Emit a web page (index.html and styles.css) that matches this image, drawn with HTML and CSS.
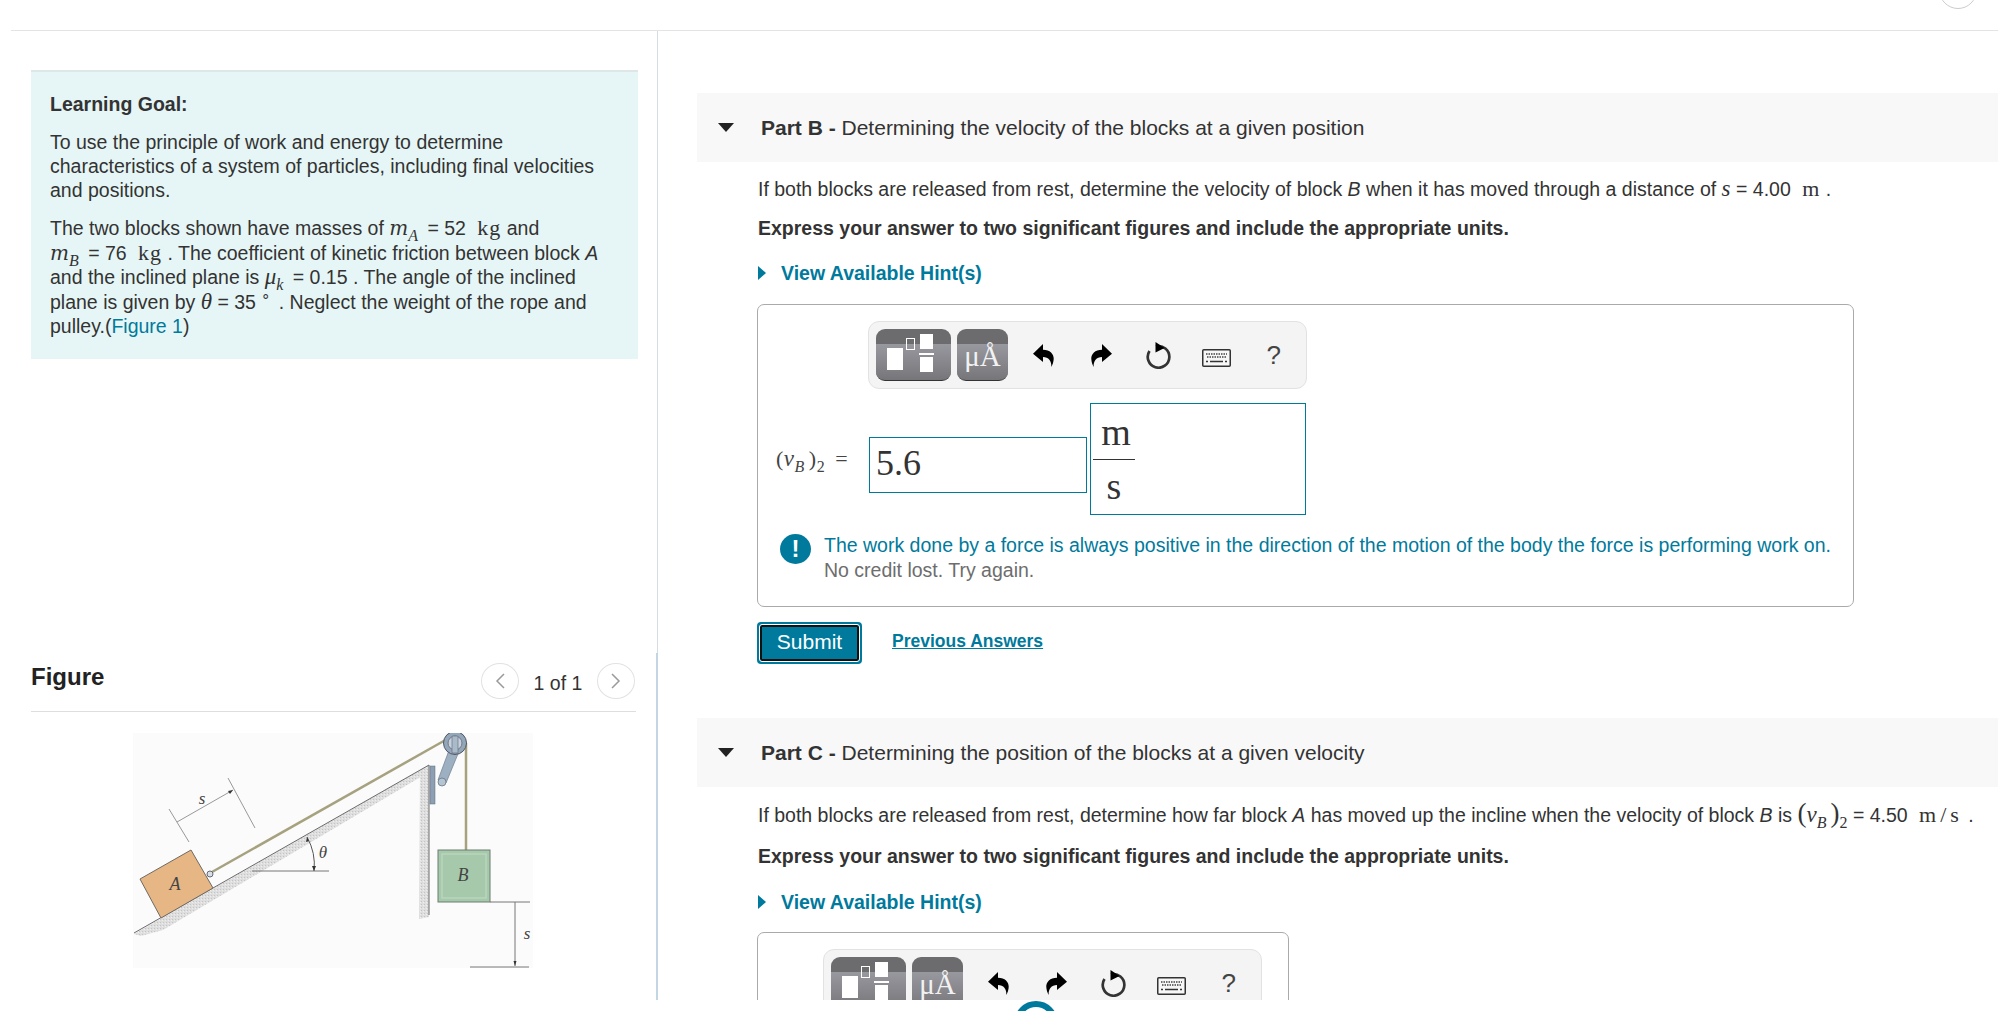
FILE: index.html
```html
<!DOCTYPE html>
<html lang="en">
<head>
<meta charset="utf-8">
<title>Work and energy</title>
<link rel="stylesheet" href="styles.css">
</head>
<body>
<div class="page">
  <header class="topbar"><span class="top-circle"></span></header>
  <main class="main">
    <section class="left">
      <div class="left-top">
        <div class="goal">
          <p class="goal-title">Learning Goal:</p>
          <p class="goal-p">To use the principle of work and energy to determine characteristics of a system of particles, including final velocities and positions.</p>
          <p class="goal-p goal-p2">The two blocks shown have masses of <span class="mi mi-m">m</span><sub class="ms">A</sub> = 52 <span class="mu">kg</span> and<br><span class="mi mi-m">m</span><sub class="ms">B</sub> = 76 <span class="mu">kg</span> . The coefficient of kinetic friction between block <i>A</i> and the inclined plane is <span class="mi">μ</span><sub class="ms">k</sub> = 0.15 . The angle of the inclined plane is given by <span class="mi">θ</span> = 35 <sup class="deg">∘</sup> . Neglect the weight of the rope and pulley.(<a class="link">Figure 1</a>)</p>
        </div>
      </div>
      <div class="figure">
        <div class="fig-head">
          <h2 class="fig-title">Figure</h2>
          <div class="fig-nav">
            <span class="nav-btn"><svg width="12" height="18" viewBox="0 0 12 18"><path d="M10 2 3 9l7 7" class="chev"/></svg></span>
            <span class="fig-count">1 of 1</span>
            <span class="nav-btn"><svg width="12" height="18" viewBox="0 0 12 18"><path d="M2 2l7 7-7 7" class="chev"/></svg></span>
          </div>
        </div>
        <svg class="diagram" width="400" height="235" viewBox="0 0 400 235">
          <defs>
            <pattern id="stip" width="3" height="3" patternUnits="userSpaceOnUse"><rect width="3" height="3" fill="#dedede"/><rect width="1" height="1" fill="#c4c4c4"/><rect x="2" y="1" width="1" height="1" fill="#eeeeee"/></pattern>
          </defs>
          <rect width="400" height="235" fill="#fbfbfb"/>
          <polygon points="1,201 296,32 296,39 30,197 8,203" fill="url(#stip)"/>
          <polygon points="287,38 296,32 296,184 286,186" fill="url(#stip)"/>
          <path d="M1 200 296 32V182" fill="none" stroke="#6a6a6a" stroke-width="1"/>
          <path d="M79 139 316 5" stroke="#a6a27f" stroke-width="2.500" fill="none"/>
          <path d="M333 10V117" stroke="#a6a27f" stroke-width="2.500" fill="none"/>
          <polygon points="318,12 327,16 313,50 305,47" fill="#9db0c2" stroke="#6d7d8e" stroke-width=".7"/>
          <rect x="297" y="33" width="5" height="38" fill="#8d9fb2" stroke="#5c6b7a" stroke-width=".5"/>
          <circle cx="309" cy="49" r="4" fill="#b4c4d2" stroke="#5c6b7a" stroke-width=".7"/>
          <circle cx="322" cy="10" r="11.500" fill="#93a7ba" stroke="#556" stroke-width="1"/>
          <circle cx="322" cy="10" r="7" fill="#c5d2de" stroke="#778"/>
          <rect x="319" y="3" width="6" height="17" rx="1" fill="#a9bac9" stroke="#667" stroke-width=".6"/>
          <circle cx="77" cy="141" r="3" fill="#d8dfe5" stroke="#667"/>
          <polygon points="7,146 58,117 80,155 28,185" fill="#e6b784" stroke="#6f6a62" stroke-width="1"/>
          <text x="42" y="157" class="dg dg-big">A</text>
          <rect x="305" y="117" width="52" height="52" fill="#a6c9ac" stroke="#6c7d70" stroke-width="1"/>
          <rect x="309" y="121" width="44" height="44" fill="none" stroke="#bfdcc4" stroke-width="1"/>
          <text x="330" y="148" class="dg dg-big">B</text>
          <path d="M357 169H397M382 169V233M337 234H396" stroke="#777" fill="none" stroke-width="1"/>
          <path d="M382 233l-1.500-5h3z" fill="#333"/>
          <text x="394" y="206" class="dg">s</text>
          <path d="M36 76 56 109M95 45 122 95M44 89 100 57" stroke="#999" fill="none" stroke-width="1"/>
          <path d="M100 57l-5 1 2 3z" fill="#333"/>
          <text x="69" y="71" class="dg">s</text>
          <path d="M119 138H196" stroke="#777" fill="none" stroke-width="1"/>
          <path d="M174 104Q183 120 181 138" stroke="#555" fill="none" stroke-width="1"/>
          <path d="M174 104l-1 5 3-1zM181 138l-2-5h4z" fill="#333"/>
          <text x="190" y="125" class="dg">θ</text>
        </svg>
      </div>
    </section>
    <section class="right">
      <article class="part part-b">
        <h3 class="part-head"><span class="tri-down"></span><b class="part-b-label">Part B -</b> Determining the velocity of the blocks at a given position</h3>
        <div class="part-body">
          <p class="q">If both blocks are released from rest, determine the velocity of block <i>B</i> when it has moved through a distance of <span class="mi">s</span> = 4.00 <span class="mu">m</span> .</p>
          <p class="q q-bold">Express your answer to two significant figures and include the appropriate units.</p>
          <p class="hint"><span class="tri-right"></span>View Available Hint(s)</p>
          <div class="box box-b">
            <div class="toolbar toolbar-b">
              <span class="tbtn tbtn-wide">
                <i class="t-big"></i><i class="t-sup"></i><i class="t-num"></i><i class="t-bar"></i><i class="t-den"></i>
              </span>
              <span class="tbtn tbtn-units">μÅ</span>
              <span class="tools">
                <span class="tool"><svg width="21" height="23" viewBox="0 0 21 23"><path class="ico" d="M0 9.700 10 0V5.700C17 5.700 21 10 20.700 15 20.500 18 19.500 21 18.300 23 18.800 17 15.500 13 10 13V18Z"/></svg></span>
                <span class="tool"><svg width="21" height="23" viewBox="0 0 21 23"><path class="ico" d="M21 9.700 11 0V5.700C4 5.700 0 10 .3 15 .5 18 1.500 21 2.700 23 2.200 17 5.500 13 11 13V18Z"/></svg></span>
                <span class="tool"><svg width="25" height="27" viewBox="0 0 25 27"><path d="M10 4.400A10.800 10.800 0 1 1 3.500 9" fill="none" stroke="#333" stroke-width="2.700"/><path class="ico" d="M9.500 0 18.500 6 9.500 10.500Z"/></svg></span>
                <span class="tool tool-kb"><svg width="29" height="18" viewBox="0 0 29 18"><rect x=".75" y=".75" width="27.500" height="16.500" rx="1" fill="#f7f7f7" stroke="#333" stroke-width="1.500"/><path d="M4 5H25M5 8H24" stroke="#444" stroke-width="1.500" stroke-dasharray="1.500 1"/><path d="M4 12.500H6M8 12.500H21M23 12.500H25" stroke="#333" stroke-width="1.500"/></svg></span>
                <span class="tool tool-q">?</span>
              </span>
            </div>
            <div class="math-row">
              <span class="math-label">(<span class="mi">v</span><sub class="ms">B</sub>)<sub class="ms2">2</sub> =</span>
              <span class="ans">5.6</span>
              <span class="unit"><span class="frac"><span class="frac-top">m</span><span class="frac-bot">s</span></span></span>
            </div>
            <div class="feedback">
              <span class="fb-icon">!</span>
              <div class="fb-text">
                <p class="fb-main">The work done by a force is always positive in the direction of the motion of the body the force is performing work on.</p>
                <p class="fb-sub">No credit lost. Try again.</p>
              </div>
            </div>
          </div>
          <div class="actions">
            <span class="submit"><span class="submit-in">Submit</span></span>
            <a class="prev">Previous Answers</a>
          </div>
        </div>
      </article>
      <article class="part part-c">
        <h3 class="part-head"><span class="tri-down"></span><b class="part-b-label">Part C -</b> Determining the position of the blocks at a given velocity</h3>
        <div class="part-body">
          <p class="q q-tall">If both blocks are released from rest, determine how far block <i>A</i> has moved up the incline when the velocity of block <i>B</i> is <span class="big-math">(<span class="mi">v</span><sub class="ms">B</sub>)<sub class="ms2">2</sub></span> = 4.50 <span class="mu mu-wide">m/s</span> .</p>
          <p class="q q-bold">Express your answer to two significant figures and include the appropriate units.</p>
          <p class="hint"><span class="tri-right"></span>View Available Hint(s)</p>
          <div class="box box-c">
            <div class="toolbar toolbar-c">
              <span class="tbtn tbtn-wide">
                <i class="t-big"></i><i class="t-sup"></i><i class="t-num"></i><i class="t-bar"></i><i class="t-den"></i>
              </span>
              <span class="tbtn tbtn-units">μÅ</span>
              <span class="tools">
                <span class="tool"><svg width="21" height="23" viewBox="0 0 21 23"><path class="ico" d="M0 9.700 10 0V5.700C17 5.700 21 10 20.700 15 20.500 18 19.500 21 18.300 23 18.800 17 15.500 13 10 13V18Z"/></svg></span>
                <span class="tool"><svg width="21" height="23" viewBox="0 0 21 23"><path class="ico" d="M21 9.700 11 0V5.700C4 5.700 0 10 .3 15 .5 18 1.500 21 2.700 23 2.200 17 5.500 13 11 13V18Z"/></svg></span>
                <span class="tool"><svg width="25" height="27" viewBox="0 0 25 27"><path d="M10 4.400A10.800 10.800 0 1 1 3.500 9" fill="none" stroke="#333" stroke-width="2.700"/><path class="ico" d="M9.500 0 18.500 6 9.500 10.500Z"/></svg></span>
                <span class="tool tool-kb"><svg width="29" height="18" viewBox="0 0 29 18"><rect x=".75" y=".75" width="27.500" height="16.500" rx="1" fill="#f7f7f7" stroke="#333" stroke-width="1.500"/><path d="M4 5H25M5 8H24" stroke="#444" stroke-width="1.500" stroke-dasharray="1.500 1"/><path d="M4 12.500H6M8 12.500H21M23 12.500H25" stroke="#333" stroke-width="1.500"/></svg></span>
                <span class="tool tool-q">?</span>
              </span>
            </div>
          </div>
        </div>
      </article>
    </section>
  </main>
  <span class="help-fab"></span>
</div>
</body>
</html>
```
FILE: styles.css
```css
* { box-sizing: border-box; }
html, body { margin: 0; height: 100%; }
body { font-family: "Liberation Sans", Arial, sans-serif; font-size: 19.500px; line-height: 24px; color: #333; background: #fff; overflow: hidden; }
p, h2, h3 { margin: 0; }
.page { position: relative; height: 1011px; overflow: hidden; }

.topbar { position: relative; height: 31px; margin-left: 11px; border-bottom: 1px solid #e2e4e6; }
.top-circle { position: absolute; right: 21px; top: -29px; width: 38px; height: 38px; border: 1px solid #ccc; border-radius: 50%; }

.main { display: flex; height: 969px; overflow: hidden; }
.left { flex: 0 0 658px; }
.left-top { height: 622px; padding: 39px 0 0 31px; border-right: 1px solid #d6dce2; }
.goal { width: 607px; height: 289px; padding: 20px 19px 0; background: #e6f6f6; border-top: 2px solid #dfe6e6; }
.goal-title { font-weight: 700; }
.goal-p { margin-top: 14px; }
.goal-p2 { margin-top: 14px; line-height: 24.600px; }
.mi { font-family: "Liberation Serif", serif; font-style: italic; font-size: 23px; line-height: 0; }
.mi-m { font-family: "DejaVu Serif", serif; font-size: 20px; }
.ms { margin-right: 4px; font-family: "Liberation Serif", serif; font-style: italic; font-size: 16px; line-height: 0; vertical-align: -6px; }
.ms2 { font-family: "Liberation Serif", serif; font-size: 16px; line-height: 0; vertical-align: -6px; }
.mu { font-family: "Liberation Serif", serif; font-size: 22px; letter-spacing: 1px; line-height: 0; margin-left: 6px; }
.mu-wide { letter-spacing: 4px; }
.deg { margin-right: 3px; font-size: 15px; line-height: 0; vertical-align: 8px; }
.link { color: #007a9c; }

.figure { height: 347px; padding: 10px 0 0 31px; border-right: 2px solid #c3d6e4; }
.fig-head { display: flex; align-items: center; justify-content: space-between; width: 605px; height: 49px; padding-bottom: 13px; border-bottom: 1px solid #dcdfe0; }
.fig-title { margin-bottom: 8px; font-size: 24px; line-height: 30px; font-weight: 700; color: #222; }
.fig-nav { display: flex; align-items: center; margin-right: 1px; }
.nav-btn { display: flex; align-items: center; justify-content: center; width: 38px; height: 36px; border: 1px solid #e2e2e2; border-radius: 50%; }
.chev { fill: none; stroke: #9a9a9a; stroke-width: 1.500; }
.fig-count { width: 78px; padding-top: 5px; text-align: center; }
.diagram { display: block; margin: 21px 0 0 102px; }
.dg { font-family: "Liberation Serif", serif; font-style: italic; font-size: 17px; fill: #444; text-anchor: middle; }
.dg-big { font-size: 18px; }

.right { flex: 1; min-width: 0; padding: 62px 0 0 39px; }
.part-head { display: flex; align-items: center; height: 69px; background: #f8f8f8; font-size: 21px; font-weight: 400; white-space: pre; }
.part-b-label { font-weight: 700; }
.tri-down { width: 0; height: 0; margin: 0 27px 0 21px; border-left: 8px solid transparent; border-right: 8px solid transparent; border-top: 9px solid #222; }
.part-body { padding-left: 61px; }
.q { margin-top: 15px; white-space: nowrap; }
.q-bold { font-weight: 700; }
.q-tall { margin-top: 14px; line-height: 28px; }
.big-math { font-family: "Liberation Serif", serif; font-size: 27px; line-height: 0; }
.hint { display: flex; align-items: center; margin-top: 21px; font-weight: 700; color: #007a9c; }
.part-c .hint { margin-top: 22px; }
.tri-right { width: 0; height: 0; margin-right: 15px; border-top: 7.500px solid transparent; border-bottom: 7.500px solid transparent; border-left: 8px solid #007a9c; }

.box { margin: 19px 0 0 -1px; border: 1px solid #aaa; border-radius: 7px; }
.box-b { width: 1097px; height: 303px; padding-top: 16px; }
.box-c { width: 532px; height: 100px; padding-top: 16px; margin-top: 18px; }
.toolbar { display: flex; align-items: flex-start; width: 439px; height: 68px; padding: 7px 0 7px 7px; background: #f4f4f4; border: 1px solid #e2e2e2; border-radius: 11px; }
.toolbar-b { margin-left: 110px; }
.toolbar-c { margin-left: 65px; }
.tbtn { position: relative; display: block; flex: none; height: 52px; border-radius: 9px; border-bottom: 1px solid #333; background: linear-gradient(#6c6c6e 0, #6c6c6e 15px, #98989f 15px, #76767a 100%); }
.tbtn-wide { width: 75px; }
.tbtn-units { width: 51px; margin-left: 6px; padding-top: 9px; font-family: "Liberation Serif", serif; font-size: 29px; line-height: 36px; text-align: center; color: #f2f2f2; }
.tbtn i { position: absolute; display: block; background: #fff; }
.t-big { left: 11px; top: 19px; width: 16px; height: 22px; }
.tbtn .t-sup { left: 30px; top: 9px; width: 9px; height: 12px; background: none; border: 1px solid #fff; }
.t-num { left: 44px; top: 5px; width: 13px; height: 15px; }
.t-bar { left: 43px; top: 24px; width: 15px; height: 2px; }
.t-den { left: 44px; top: 28px; width: 13px; height: 15px; }
.tools { display: flex; flex: none; margin-left: 7px; }
.tool { display: flex; flex: none; align-items: center; justify-content: center; width: 57.500px; height: 52px; }
.tool-kb { padding-top: 6px; }
.tool-q { font-size: 26px; color: #444; }

.math-row { display: flex; align-items: flex-start; height: 112px; margin: 14px 0 0 18px; }
.math-label { align-self: center; flex: none; width: 93px; font-family: "Liberation Serif", serif; font-size: 22px; letter-spacing: .5px; word-spacing: 4px; color: #444; white-space: nowrap; }
.ans { width: 218px; height: 56px; margin: 34px 3px 0 0; padding: 0 6px; border: 1.500px solid #007a9c; font-family: "Liberation Serif", serif; font-size: 36px; line-height: 51px; }
.unit { width: 216px; height: 112px; padding: 11px 2px; border: 1.500px solid #007a9c; font-family: "Liberation Serif", serif; font-size: 38px; }
.frac { display: block; width: 42px; text-align: center; }
.frac-top { display: block; height: 45px; padding-left: 4px; line-height: 34px; border-bottom: 1.500px solid #333; }
.frac-bot { display: block; line-height: 52px; }

.feedback { display: flex; margin: 19px 0 0 22px; }
.fb-icon { flex: 0 0 31px; height: 30px; margin-right: 13px; border-radius: 50%; background: #007a9c; color: #fff; font-weight: 700; font-size: 24px; line-height: 30px; text-align: center; }
.fb-text { margin-top: -1px; white-space: nowrap; }
.fb-main { color: #007a9c; }
.fb-sub { margin-top: 1px; color: #6d6d6d; }

.actions { display: flex; align-items: center; margin: 15px 0 0 -1px; }
.submit { display: block; width: 105px; height: 42px; padding: 3px; border-radius: 4px; background: #007a9c; }
.submit-in { display: block; height: 36px; border: 2px solid #111; outline: 1px solid #fff; border-radius: 2px; background: #007a9c; color: #fff; font-size: 21px; text-align: center; line-height: 30px; }
.prev { margin: 0 0 4px 30px; color: #007a9c; font-size: 17.500px; font-weight: 700; text-decoration: underline; }

.part-c { margin-top: 54px; }
.help-fab { position: absolute; left: 1014px; top: 1001px; width: 44px; height: 44px; border: 6px solid #007a9c; border-radius: 50%; background: #fff; }
```
